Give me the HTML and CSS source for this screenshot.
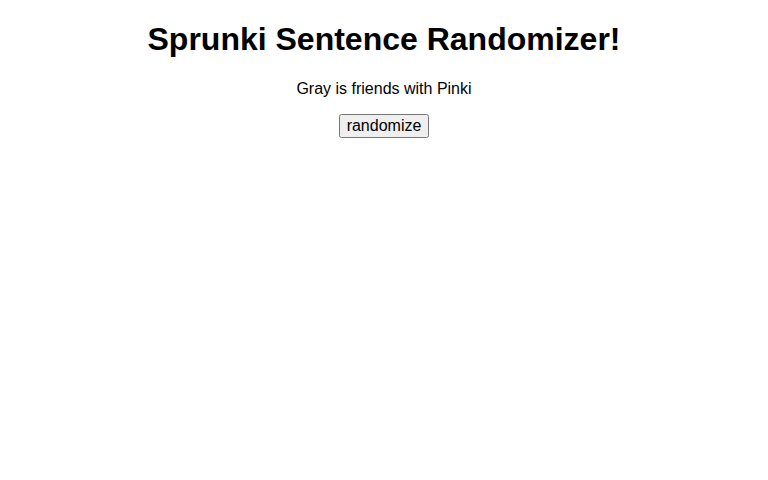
FILE: index.html
```html
<!DOCTYPE html>
<html lang="en">
<head>
    <meta charset="UTF-8">
    <meta name="viewport" content="width=device-width, initial-scale=1.0">
    <title>Sprunki Sentence Randomizer</title>
    <link rel="stylesheet" href="styles.css">
</head>
<body>
    <h1>Sprunki Sentence Randomizer!</h1>
    <p id="sentence">Gray is friends with Pinki</p>
    <button id="randomize">randomize</button>

    <script>
        const names = ["Gray", "Pinki", "Oren", "Raddy", "Clukr", "Vineria", "Wenda", "Simon", "Tunner", "Brud"];
        const links = ["is friends with", "hates", "is scared of", "sings with", "dances with"];

        function pick(list) {
            return list[Math.floor(Math.random() * list.length)];
        }

        document.getElementById("randomize").addEventListener("click", function() {
            let a = pick(names);
            let b = pick(names);
            while (b === a) b = pick(names);
            document.getElementById("sentence").textContent = `${a} ${pick(links)} ${b}`;
        });
    </script>
</body>
</html>
```

FILE: styles.css
```css
body {
    font-family: "Liberation Sans", Arial, sans-serif;
    text-align: center;
    margin: 0;
}
button {
    font-family: "Liberation Sans", Arial, sans-serif;
    font-size: 16px;
}
```
